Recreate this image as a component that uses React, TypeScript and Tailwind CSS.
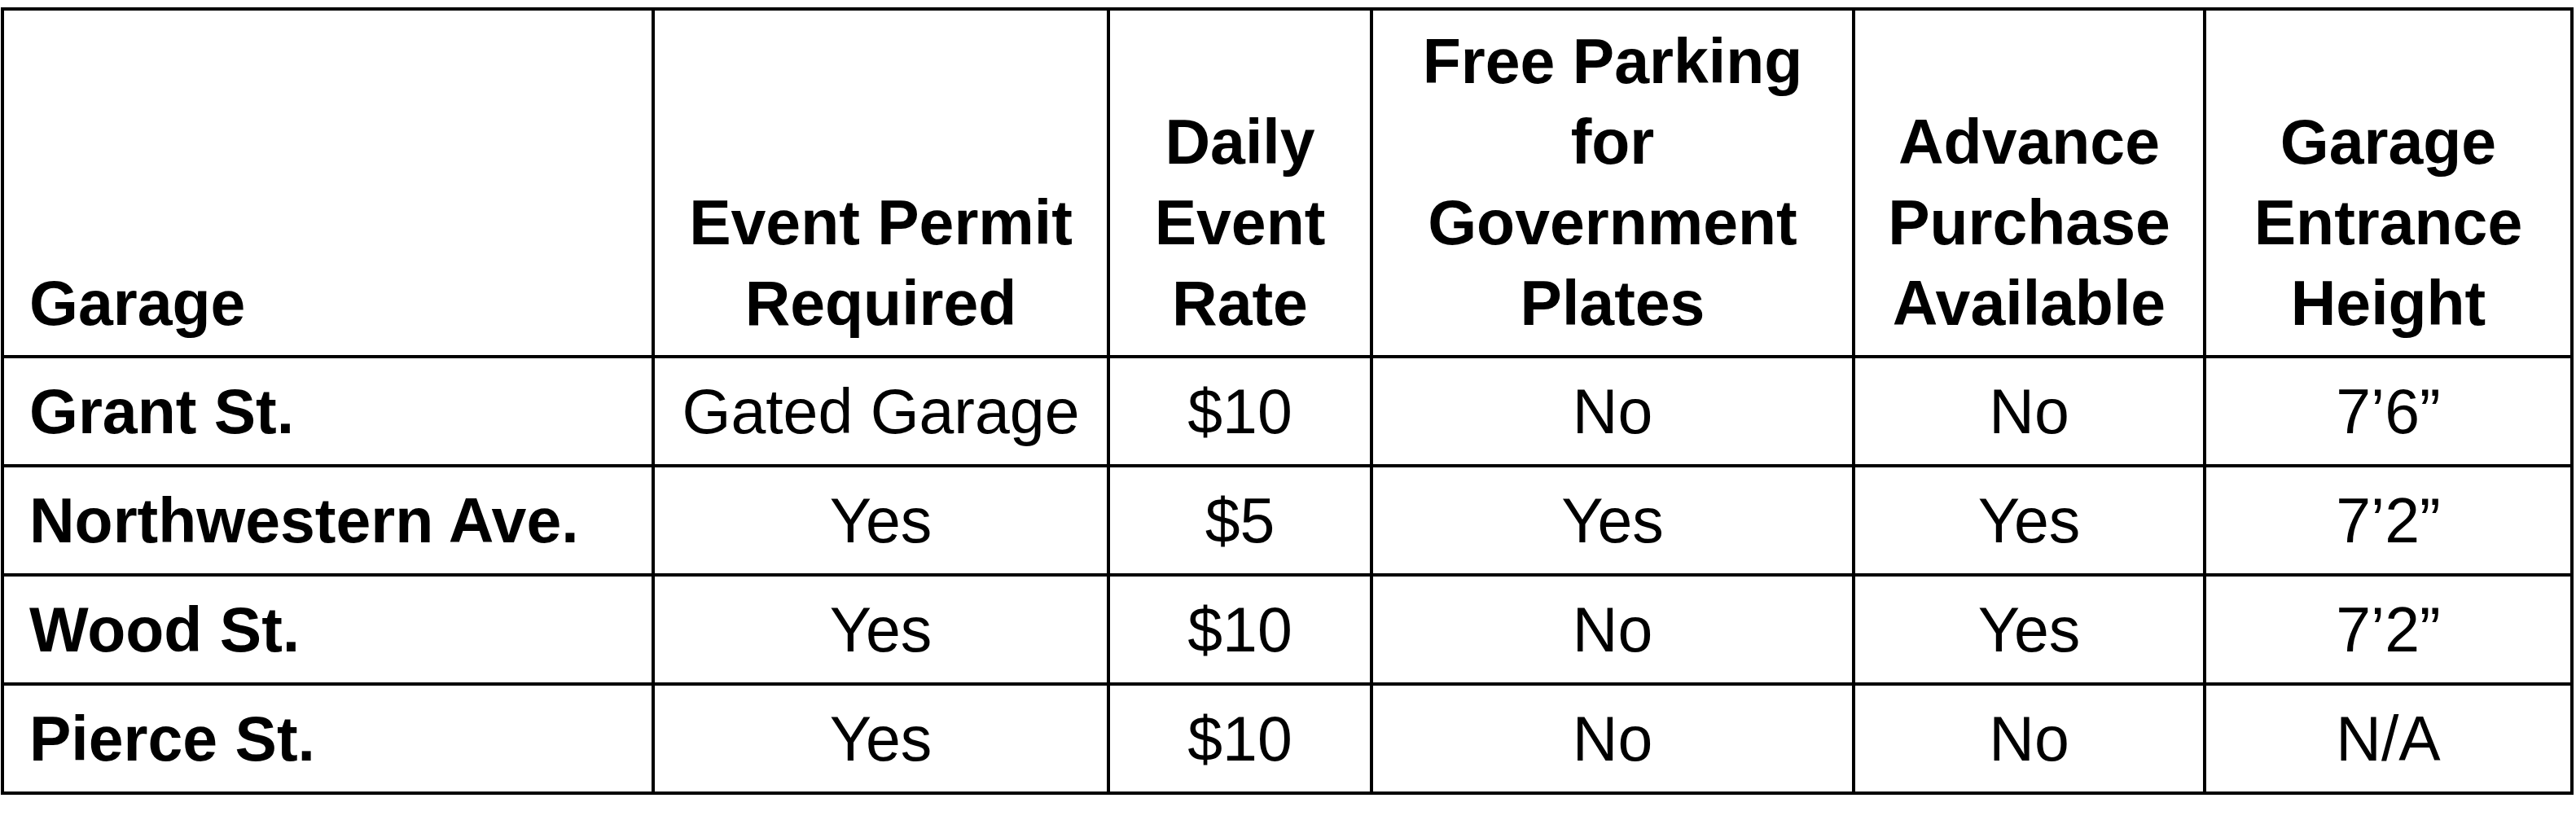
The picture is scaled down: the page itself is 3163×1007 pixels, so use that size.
import React from "react";

const headers: string[][] = [
  ["Event Permit", "Required"],
  ["Daily", "Event", "Rate"],
  ["Free Parking", "for", "Government", "Plates"],
  ["Advance", "Purchase", "Available"],
  ["Garage", "Entrance", "Height"],
];

const rows: string[][] = [
  ["Grant St.", "Gated Garage", "$10", "No", "No", "7\u20196\u201d"],
  ["Northwestern Ave.", "Yes", "$5", "Yes", "Yes", "7\u20192\u201d"],
  ["Wood St.", "Yes", "$10", "No", "Yes", "7\u20192\u201d"],
  ["Pierce St.", "Yes", "$10", "No", "No", "N/A"],
];

export default function App() {
  return (
    <div className="w-[3163px] h-[1007px] bg-white font-['Liberation_Sans',Arial,sans-serif] text-black">
      <div className="pt-[9px] pl-[1px]">
        <div className="grid w-[3159px] grid-cols-[795px_555px_319px_588px_427px_447px] grid-rows-[423px_130px_130px_130px_130px] gap-[4px] bg-black p-[4px]">
          <div className="flex items-end bg-white pb-[14px] pl-[31px] text-[77px] font-bold leading-[99px]">
            Garage
          </div>
          {headers.map((lines, i) => (
            <div
              key={i}
              className="flex flex-col items-center justify-end bg-white pb-[14px] text-center text-[77px] font-bold leading-[99px]"
            >
              {lines.map((l, j) => (
                <span key={j} className="whitespace-nowrap">
                  {l}
                </span>
              ))}
            </div>
          ))}
          {rows.map((r, ri) => (
            <React.Fragment key={ri}>
              <div className="flex items-center bg-white pl-[31px] text-[77px] font-bold leading-[99px] whitespace-nowrap">
                {r[0]}
              </div>
              {r.slice(1).map((c, ci) => (
                <div
                  key={ci}
                  className="flex items-center justify-center bg-white text-[77px] leading-[99px] whitespace-nowrap"
                >
                  {c}
                </div>
              ))}
            </React.Fragment>
          ))}
        </div>
      </div>
    </div>
  );
}
